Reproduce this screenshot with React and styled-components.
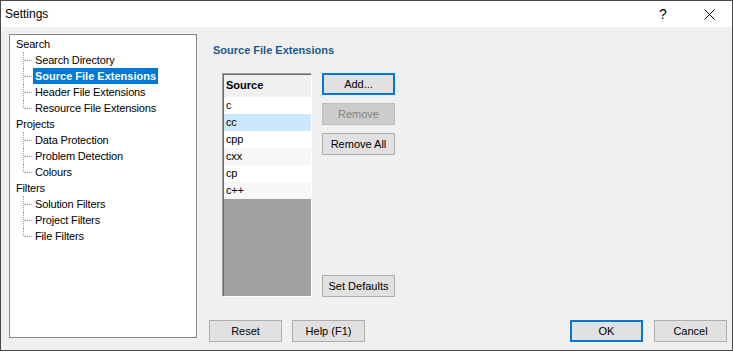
import React from "react";
import styled, { createGlobalStyle, css } from "styled-components";

const Global = createGlobalStyle`
  html, body { margin: 0; padding: 0; background: #ffffff; }
  body { font-family: "Liberation Sans", Arial, sans-serif; }
  * { box-sizing: border-box; }
`;

const Window = styled.div`
  width: 733px;
  height: 351px;
  border: 1px solid #4a4a4a;
  background: #f0f0f0;
  display: flex;
  flex-direction: column;
  font-family: "Liberation Sans", Arial, sans-serif;
  font-size: 11px;
  letter-spacing: -0.15px;
  color: #000;
`;

const TitleBar = styled.div`
  height: 26px;
  background: #ffffff;
  display: flex;
  align-items: center;
  padding-left: 4px;
  flex-shrink: 0;
`;

const Title = styled.div`
  font-size: 12px;
  letter-spacing: 0;
  flex: 1;
`;

const CaptionButton = styled.div`
  width: 46px;
  height: 26px;
  display: flex;
  align-items: center;
  justify-content: center;
  font-size: 14px;
  letter-spacing: 0;
`;

const Body = styled.div`
  flex: 1;
  display: flex;
  padding: 7px 5px 8px 8px;
  min-height: 0;
`;

const Tree = styled.div`
  width: 188px;
  height: 304px;
  flex-shrink: 0;
  background: #ffffff;
  border: 1px solid #828790;
  padding-top: 1px;
`;

const TreeRow = styled.div`
  height: 16px;
  line-height: 16px;
  position: relative;
  display: flex;
`;

const ChildRow = styled(TreeRow)`
  &::before {
    content: "";
    position: absolute;
    left: 13px;
    top: 0;
    bottom: 0;
    border-left: 1px dotted #a0a0a0;
  }
  &:last-child::before {
    bottom: 8px;
  }
  &::after {
    content: "";
    position: absolute;
    left: 14px;
    top: 8px;
    width: 8px;
    border-top: 1px dotted #a0a0a0;
  }
`;

const Label = styled.span`
  padding: 0 2px;
  margin-left: ${(p) => (p.$child ? "23px" : "4px")};
  white-space: nowrap;
  ${(p) =>
    p.$selected &&
    css`
      background: #0078d7;
      color: #ffffff;
      font-weight: bold;
      letter-spacing: 0;
    `}
`;

const RightColumn = styled.div`
  flex: 1;
  margin-left: 12px;
  display: flex;
  flex-direction: column;
`;

const Heading = styled.div`
  margin-top: 8px;
  padding-left: 4px;
  line-height: 16px;
  font-weight: bold;
  letter-spacing: 0;
  color: #1b5a8c;
`;

const ContentRow = styled.div`
  display: flex;
  gap: 10px;
  margin-top: 15px;
  padding-left: 13px;
`;

const ListBox = styled.div`
  width: 90px;
  height: 224px;
  border-style: solid;
  border-width: 1px;
  border-color: #a0a0a0 #ffffff #ffffff #a0a0a0;
  box-shadow: inset 1px 1px 0 #696969;
  background: #a0a0a0;
  display: flex;
  flex-direction: column;
  padding: 1px 0 0 1px;
`;

const ListHeader = styled.div`
  height: 22px;
  background: #f0f0f0;
  font-weight: bold;
  letter-spacing: 0;
  padding: 2px 0 0 2px;
  line-height: 16px;
`;

const ListRow = styled.div`
  height: 17px;
  line-height: 17px;
  padding-left: 2px;
  background: ${(p) => (p.$selected ? "#cce8ff" : p.$alt ? "#f7f7f7" : "#ffffff")};
`;

const ButtonColumn = styled.div`
  display: flex;
  flex-direction: column;
  gap: 8px;
  height: 224px;
`;

const Button = styled.div`
  width: 73px;
  height: 22px;
  display: flex;
  align-items: center;
  justify-content: center;
  background: #e1e1e1;
  border: 1px solid #adadad;
  color: #000;
  letter-spacing: 0;
  white-space: nowrap;
  ${(p) =>
    p.$default &&
    css`
      border-color: #0078d7;
      box-shadow: inset 0 0 0 1px #0078d7;
    `}
  ${(p) =>
    p.$disabled &&
    css`
      background: #cccccc;
      border-color: #bfbfbf;
      color: #838383;
    `}
  ${(p) =>
    p.$bottom &&
    css`
      margin-top: auto;
    `}
`;

const BottomRow = styled.div`
  margin-top: auto;
  display: flex;
  gap: 10px;
`;

const Spacer = styled.div`
  flex: 1;
`;

const OkGroup = styled.div`
  display: flex;
  gap: 11px;
`;

const tree = [
  { name: "Search", children: ["Search Directory", "Source File Extensions", "Header File Extensions", "Resource File Extensions"] },
  { name: "Projects", children: ["Data Protection", "Problem Detection", "Colours"] },
  { name: "Filters", children: ["Solution Filters", "Project Filters", "File Filters"] },
];

const items = ["c", "cc", "cpp", "cxx", "cp", "c++"];

function CloseIcon() {
  return (
    <svg width="11" height="11" viewBox="0 0 11 11">
      <path d="M0.5 0.5 L10.5 10.5 M10.5 0.5 L0.5 10.5" stroke="#000" strokeWidth="1" fill="none" />
    </svg>
  );
}

export default function App() {
  return (
    <>
      <Global />
      <Window>
        <TitleBar>
          <Title>Settings</Title>
          <CaptionButton>?</CaptionButton>
          <CaptionButton>
            <CloseIcon />
          </CaptionButton>
        </TitleBar>
        <Body>
          <Tree>
            {tree.map((g) => (
              <div key={g.name}>
                <TreeRow>
                  <Label>{g.name}</Label>
                </TreeRow>
                <div>
                  {g.children.map((c) => (
                    <ChildRow key={c}>
                      <Label $child $selected={c === "Source File Extensions"}>
                        {c}
                      </Label>
                    </ChildRow>
                  ))}
                </div>
              </div>
            ))}
          </Tree>
          <RightColumn>
            <Heading>Source File Extensions</Heading>
            <ContentRow>
              <ListBox>
                <ListHeader>Source</ListHeader>
                {items.map((it, i) => (
                  <ListRow key={it} $selected={i === 1} $alt={i === 3 || i === 5}>
                    {it}
                  </ListRow>
                ))}
              </ListBox>
              <ButtonColumn>
                <Button $default>Add...</Button>
                <Button $disabled>Remove</Button>
                <Button>Remove All</Button>
                <Button $bottom>Set Defaults</Button>
              </ButtonColumn>
            </ContentRow>
            <BottomRow>
              <Button>Reset</Button>
              <Button>Help (F1)</Button>
              <Spacer />
              <OkGroup>
                <Button $default>OK</Button>
                <Button>Cancel</Button>
              </OkGroup>
            </BottomRow>
          </RightColumn>
        </Body>
      </Window>
    </>
  );
}
